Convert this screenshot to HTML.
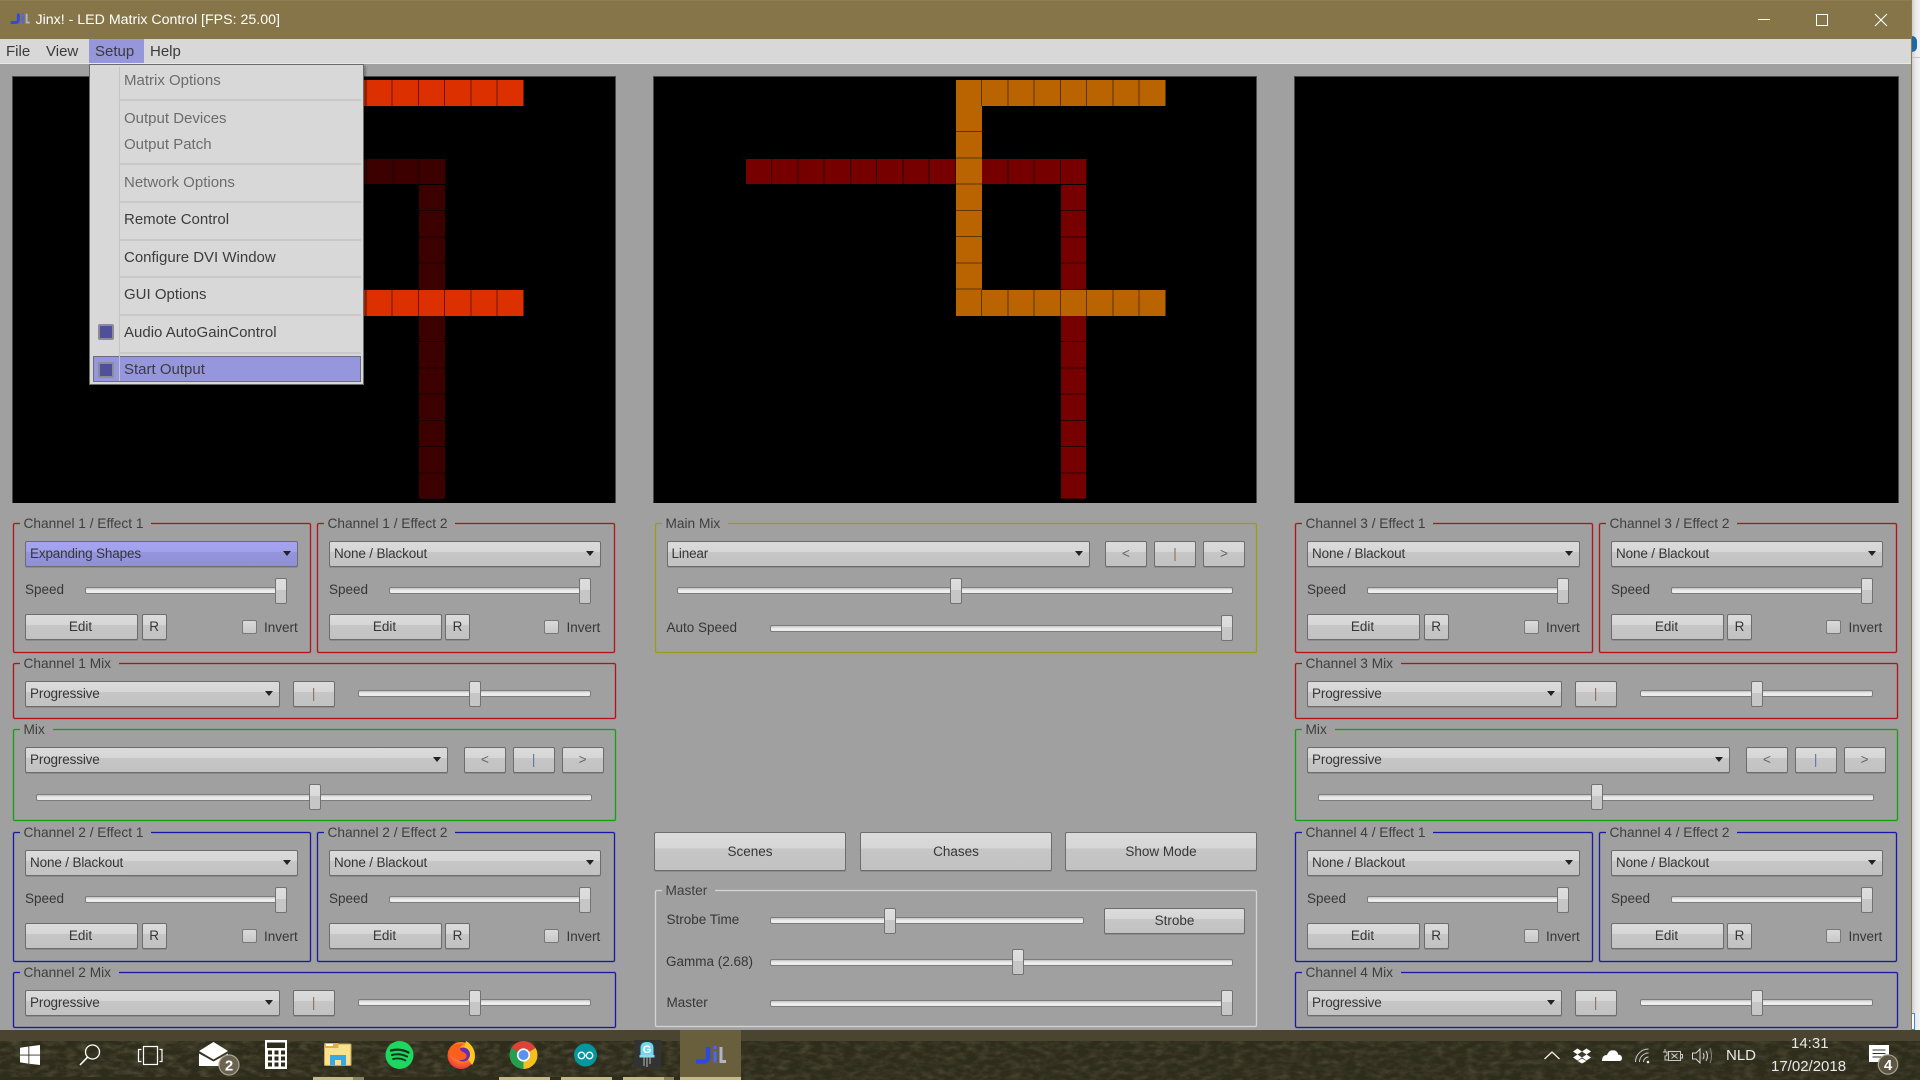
<!DOCTYPE html>
<html><head><meta charset="utf-8"><title>Jinx! - LED Matrix Control</title>
<style>
*{box-sizing:border-box}
html,body{margin:0;padding:0;width:1920px;height:1080px;overflow:hidden;background:#e8e8e8}
body{position:relative;font-family:"Liberation Sans",sans-serif}
.abs,.gb,.b,.t,.h,.x,.d,.s,.col,.lg,.cb,.orv,.drv,.mrv{position:absolute}
#side{left:1912px;top:0;width:8px;height:1030px;background:linear-gradient(90deg,#cfcfcf,#ececec 50%,#f2f2f2)}
#app{left:0;top:0;width:1912px;height:1030px;background:#a0a0a0;border-right:1px solid #8a7a50;overflow:hidden}
#title{left:0;top:0;width:1911px;height:39px;background:#857548;border-top:1px solid #8e7e52}
#mbar{left:0;top:39px;width:1911px;height:25px;background:#d8d8d8;border-bottom:1px solid #e8e8e8}
#ui{left:0;top:0;width:1911px;height:1030px;filter:blur(.35px)}
.d{background:#000;border:1px solid #4a4a4a;border-bottom:0;top:76px;width:604px;height:427px}
.s{height:25.6px}
.hz{width:209.9px}
.or{background:repeating-linear-gradient(90deg,#b96400 0 25.2px,#5a3600 25.2px 26.24px)}
.orv{background:repeating-linear-gradient(180deg,#b96400 0 25.2px,#5a3600 25.2px 26.24px);width:25.6px}
.dr{background:repeating-linear-gradient(90deg,#760000 0 25.2px,#2c0000 25.2px 26.24px)}
.drv{background:repeating-linear-gradient(180deg,#760000 0 25.2px,#2c0000 25.2px 26.24px);width:25.4px}
.rd{background:repeating-linear-gradient(90deg,#dc3000 0 25.2px,#6e1800 25.2px 26.24px)}
.mr{background:repeating-linear-gradient(90deg,#3c0000 0 25.2px,#1c0000 25.2px 26.24px)}
.mrv{background:repeating-linear-gradient(180deg,#3c0000 0 25.2px,#1c0000 25.2px 26.24px);width:25.4px}
.x,.b,.lg{font-size:13.5px;color:#363636;white-space:nowrap;line-height:16px}
.gb{border:1px solid;border-radius:2px}
.lg{top:-8px;left:6px;padding:0 8px 0 3.5px;background:#a0a0a0;color:#3e3e3e;font-size:13.7px}
.R{border-color:#b01418;box-shadow:0 0 1px #b01418,inset 0 0 1px #b01418}
.G{border-color:#14a014;box-shadow:0 0 1px #14a014,inset 0 0 1px #14a014}
.B{border-color:#1818a4;box-shadow:0 0 1px #1818a4,inset 0 0 1px #1818a4}
.O{border-color:#9c9c14;box-shadow:0 0 1px #9c9c14,inset 0 0 1px #9c9c14}
.W{border-color:#d4d4d4;box-shadow:0 0 1px #d4d4d4,inset 0 0 1px #d4d4d4}
.b{height:26px;border:1px solid #6c6c6c;border-radius:2px;background:linear-gradient(#dbdbdb 0,#d6d6d6 42%,#c6c6c6 42%,#c2c2c2 100%);text-align:center;line-height:24px;box-shadow:0 1px 0 #8c8c8c}
.c{text-align:left;padding-left:4px;letter-spacing:-.15px}
.c:after{content:"";position:absolute;right:6px;top:9px;border-left:4.5px solid transparent;border-right:4.5px solid transparent;border-top:5.5px solid #222}
.sel{background:linear-gradient(#a4a4f0 0,#a0a0ec 42%,#9494dc 42%,#9090d8 100%)}
.t{height:7px;border:1px solid #7c7c7c;border-radius:2px;background:linear-gradient(#cccccc 0,#cccccc 30%,#ececec 30%)}
.h{width:12px;height:26px;border:1px solid #727272;border-radius:2px;background:linear-gradient(#dedede 0,#dadada 45%,#c6c6c6 45%)}
.cb{width:15px;height:14px;border:1px solid #787878;border-radius:2px;background:linear-gradient(#dadada,#c8c8c8)}
.col{left:0;top:0;width:1911px;height:1030px}
.ef{left:13px;width:298px;height:130px}
.e2{left:317px}
.ef .c{left:11px;top:17px;width:273px}
.e2 .c{width:272px}
.ef .sp{left:11px;top:58px}
.ef .t{left:71px;top:63px;width:197px}
.ef .h{left:261px;top:54px}
.ef .ed{left:11px;top:90px;width:113px;padding-right:2px}
.ef .r{left:127.6px;top:90px;width:25px}
.ef .cb{left:228px;top:96px}
.ef .iv{left:250px;top:95.5px}
.e2 .cb{left:226px}.e2 .iv{left:248.5px}
.e2 .r{left:127px}
.mx{left:13px;width:603px;height:56px}
.mx .c{left:11px;top:17px;width:255px}
.mx .p{left:278.6px;top:17px;width:42px}
.mx .t{left:344px;top:25.5px;width:233px}
.mx .h{left:455px;top:17px}
.m2{left:13px;top:729px;width:603px;height:92px}
.m2 .c{left:11px;top:17px;width:423px}
.m2 .n1{left:450px;top:17px;width:42px}
.m2 .n2{left:498.6px;top:17px;width:42px}
.m2 .n3{left:547.6px;top:17px;width:42px}
.m2 .t{left:21.5px;top:63.5px;width:556.5px}
.m2 .h{left:295px;top:54px}
.o{color:#8a7058}.l{color:#5878a8}.g{color:#666}
#menu{left:89px;top:64px;width:275px;height:321px;background:#d8d8d8;border:1px solid #6a6a6a;box-shadow:2px 2px 2px rgba(0,0,0,.25)}
#menu .v{position:absolute;left:29px;top:2px;width:1px;height:314px;background:#c4c4c4}
#menu .sep{position:absolute;left:29px;right:2px;height:2px;background:#c8c8c8}
#menu .x{font-size:15px;left:34px;color:#3c3c3c}
#menu .dim{color:#6c6c6c}
#hl{left:3px;top:291px;width:268px;height:26px;background:#9696dc;border:1px solid #6c6c80}
.ck{position:absolute;width:16px;height:16px;background:#50509a;border:2px solid #8c8c94;border-radius:2px;left:8px}
#task{left:0;top:1030px;width:1920px;height:50px;background:#2e2c1b}
#band{left:0;top:1030px;width:1920px;height:11px;background:#4a4430}
#act{left:680px;top:1030px;width:61px;height:50px;background:#6a5f3c}
.u{position:absolute;top:1077px;height:3px;background:#c5b98a}
.u2{background:#8c8460}
.tb{position:absolute;color:#e8e8e8;font-size:15px;line-height:18px;white-space:nowrap;filter:blur(.25px)}
svg{position:absolute;left:0;top:0}
</style></head><body>
<div class="abs" id="side"></div>
<div class="abs" style="left:1912px;top:36px;width:5px;height:16px;background:#1a6aa8;border-radius:0 8px 8px 0"></div>
<div class="abs" style="left:1912px;top:57px;width:8px;height:1px;background:#c4c4c4"></div>
<div class="abs" style="left:1912px;top:1013px;width:3px;height:17px;border:1px solid #3090d0;border-left:0;background:#fff"></div>
<div class="abs" id="app"></div>

<!-- displays -->
<div class="d" style="left:12px"></div>
<div class="d" style="left:653px"></div>
<div class="d" style="left:1294px;width:605px"></div>

<!-- left LEDs -->
<div class="s rd hz" style="left:314.2px;top:80px"></div>
<div class="s mr" style="left:340.5px;top:158.5px;width:105px"></div>
<div class="mrv" style="left:419.2px;top:184.6px;height:105px"></div>
<div class="s rd hz" style="left:314.2px;top:290px"></div>
<div class="mrv" style="left:419.2px;top:315.8px;height:183.5px"></div>

<!-- middle LEDs -->
<div class="s dr" style="left:746.1px;top:158.5px;width:341px"></div>
<div class="drv" style="left:1061px;top:184.6px;height:105px"></div>
<div class="drv" style="left:1061px;top:315.8px;height:183.5px"></div>
<div class="s or hz" style="left:956px;top:80px"></div>
<div class="orv" style="left:956px;top:106.2px;height:183.7px"></div>
<div class="s or hz" style="left:956px;top:290px"></div>

<div class="abs" id="title"></div>
<div class="abs" id="mbar"></div>
<div class="abs" style="left:89px;top:39px;width:55px;height:24px;background:#9696dc"></div>

<div class="abs" id="ui">
<div class="x" style="left:35.5px;top:11px;font-size:14.2px;color:#fff;line-height:18px">Jinx! - LED Matrix Control [FPS: 25.00]</div>
<div class="x" style="left:6px;top:44px;font-size:15px;color:#3a3a3a">File</div>
<div class="x" style="left:46px;top:44px;font-size:15px;color:#3a3a3a">View</div>
<div class="x" style="left:95px;top:44px;font-size:15px;color:#3a3a3a">Setup</div>
<div class="x" style="left:150px;top:44px;font-size:15px;color:#3a3a3a">Help</div>

<!-- LEFT COLUMN -->
<div class="col">
<div class="gb ef R" style="top:523px"><span class="lg">Channel 1 / Effect 1</span><div class="b c sel">Expanding Shapes</div><div class="x sp">Speed</div><div class="t"></div><div class="h"></div><div class="b ed">Edit</div><div class="b r">R</div><div class="cb"></div><div class="x iv">Invert</div></div>
<div class="gb ef e2 R" style="top:523px"><span class="lg">Channel 1 / Effect 2</span><div class="b c">None / Blackout</div><div class="x sp">Speed</div><div class="t"></div><div class="h"></div><div class="b ed">Edit</div><div class="b r">R</div><div class="cb"></div><div class="x iv">Invert</div></div>
<div class="gb mx R" style="top:663px"><span class="lg">Channel 1 Mix</span><div class="b c">Progressive</div><div class="b p o">|</div><div class="t"></div><div class="h"></div></div>
<div class="gb m2 G"><span class="lg">Mix</span><div class="b c">Progressive</div><div class="b n1 g">&lt;</div><div class="b n2 l">|</div><div class="b n3 g">&gt;</div><div class="t"></div><div class="h"></div></div>
<div class="gb ef B" style="top:832px"><span class="lg">Channel 2 / Effect 1</span><div class="b c">None / Blackout</div><div class="x sp">Speed</div><div class="t"></div><div class="h"></div><div class="b ed">Edit</div><div class="b r">R</div><div class="cb"></div><div class="x iv">Invert</div></div>
<div class="gb ef e2 B" style="top:832px"><span class="lg">Channel 2 / Effect 2</span><div class="b c">None / Blackout</div><div class="x sp">Speed</div><div class="t"></div><div class="h"></div><div class="b ed">Edit</div><div class="b r">R</div><div class="cb"></div><div class="x iv">Invert</div></div>
<div class="gb mx B" style="top:972px"><span class="lg">Channel 2 Mix</span><div class="b c">Progressive</div><div class="b p o">|</div><div class="t"></div><div class="h"></div></div>
</div>

<!-- RIGHT COLUMN -->
<div class="col" style="left:1282px">
<div class="gb ef R" style="top:523px"><span class="lg">Channel 3 / Effect 1</span><div class="b c">None / Blackout</div><div class="x sp">Speed</div><div class="t"></div><div class="h"></div><div class="b ed">Edit</div><div class="b r">R</div><div class="cb"></div><div class="x iv">Invert</div></div>
<div class="gb ef e2 R" style="top:523px"><span class="lg">Channel 3 / Effect 2</span><div class="b c">None / Blackout</div><div class="x sp">Speed</div><div class="t"></div><div class="h"></div><div class="b ed">Edit</div><div class="b r">R</div><div class="cb"></div><div class="x iv">Invert</div></div>
<div class="gb mx R" style="top:663px"><span class="lg">Channel 3 Mix</span><div class="b c">Progressive</div><div class="b p o">|</div><div class="t"></div><div class="h"></div></div>
<div class="gb m2 G"><span class="lg">Mix</span><div class="b c">Progressive</div><div class="b n1 g">&lt;</div><div class="b n2 l">|</div><div class="b n3 g">&gt;</div><div class="t"></div><div class="h"></div></div>
<div class="gb ef B" style="top:832px"><span class="lg">Channel 4 / Effect 1</span><div class="b c">None / Blackout</div><div class="x sp">Speed</div><div class="t"></div><div class="h"></div><div class="b ed">Edit</div><div class="b r">R</div><div class="cb"></div><div class="x iv">Invert</div></div>
<div class="gb ef e2 B" style="top:832px"><span class="lg">Channel 4 / Effect 2</span><div class="b c">None / Blackout</div><div class="x sp">Speed</div><div class="t"></div><div class="h"></div><div class="b ed">Edit</div><div class="b r">R</div><div class="cb"></div><div class="x iv">Invert</div></div>
<div class="gb mx B" style="top:972px"><span class="lg">Channel 4 Mix</span><div class="b c">Progressive</div><div class="b p o">|</div><div class="t"></div><div class="h"></div></div>
</div>

<!-- MIDDLE -->
<div class="gb O" style="left:655px;top:523px;width:602px;height:130px"><span class="lg">Main Mix</span></div>
<div class="b c" style="left:666.5px;top:541px;width:423px">Linear</div>
<div class="b g" style="left:1105px;top:541px;width:42px">&lt;</div>
<div class="b o" style="left:1154px;top:541px;width:42px">|</div>
<div class="b g" style="left:1203px;top:541px;width:42px">&gt;</div>
<div class="t" style="left:677px;top:587px;width:556px"></div>
<div class="h" style="left:950px;top:578px"></div>
<div class="x" style="left:666.5px;top:619.5px">Auto Speed</div>
<div class="t" style="left:770px;top:624.5px;width:463px"></div>
<div class="h" style="left:1221px;top:615px"></div>

<div class="b" style="left:654px;top:832px;width:192px;height:39px;line-height:37px">Scenes</div>
<div class="b" style="left:860px;top:832px;width:192px;height:39px;line-height:37px">Chases</div>
<div class="b" style="left:1065px;top:832px;width:192px;height:39px;line-height:37px">Show Mode</div>

<div class="gb W" style="left:655px;top:890px;width:602px;height:137px"><span class="lg">Master</span></div>
<div class="x" style="left:666.5px;top:912px">Strobe Time</div>
<div class="t" style="left:770px;top:917px;width:314px"></div>
<div class="h" style="left:884px;top:908px"></div>
<div class="b" style="left:1104px;top:908px;width:141px">Strobe</div>
<div class="x" style="left:666px;top:953.5px">Gamma (2.68)</div>
<div class="t" style="left:770px;top:958.5px;width:463px"></div>
<div class="h" style="left:1012px;top:949px"></div>
<div class="x" style="left:666.5px;top:995px">Master</div>
<div class="t" style="left:770px;top:1000px;width:463px"></div>
<div class="h" style="left:1221px;top:990px"></div>

<!-- Setup menu -->
<div class="abs" id="menu">
<div class="abs" id="hl"></div>
<div class="v"></div>
<div class="x dim" style="top:8px">Matrix Options</div>
<div class="sep" style="top:34px"></div>
<div class="x dim" style="top:46px">Output Devices</div>
<div class="x dim" style="top:72px">Output Patch</div>
<div class="sep" style="top:98px"></div>
<div class="x dim" style="top:110px">Network Options</div>
<div class="sep" style="top:136px"></div>
<div class="x" style="top:147px">Remote Control</div>
<div class="sep" style="top:174px"></div>
<div class="x" style="top:185px">Configure DVI Window</div>
<div class="sep" style="top:211px"></div>
<div class="x" style="top:222px">GUI Options</div>
<div class="sep" style="top:249px"></div>
<div class="ck" style="top:259px"></div>
<div class="x" style="top:260px">Audio AutoGainControl</div>
<div class="sep" style="top:287px"></div>
<div class="ck" style="top:297px"></div>
<div class="x" style="top:297px">Start Output</div>
</div>
</div>

<!-- taskbar -->
<div class="abs" id="task"></div>
<div class="abs" id="band"></div>
<div class="abs" id="act"></div>
<div class="u" style="left:313px;width:40px"></div><div class="u u2" style="left:353px;width:11px"></div>
<div class="u" style="left:499px;width:51px"></div>
<div class="u" style="left:561px;width:51px"></div>
<div class="u" style="left:623px;width:41px"></div><div class="u u2" style="left:664px;width:10px"></div>
<div class="u" style="left:680px;width:61px"></div>

<svg width="1920" height="1080" viewBox="0 0 1920 1080" xmlns="http://www.w3.org/2000/svg">
<defs>
<radialGradient id="ff" cx=".55" cy=".35" r=".75"><stop offset="0" stop-color="#ffd030"/><stop offset=".5" stop-color="#ff7a20"/><stop offset="1" stop-color="#e0204a"/></radialGradient>
<filter id="gr" x="0" y="0" width="1" height="1"><feTurbulence type="fractalNoise" baseFrequency=".09 .2" numOctaves="3" seed="4"/><feColorMatrix values="0 0 0 0 .36  0 0 0 0 .36  0 0 0 0 .2  0 0 0 1.1 -.42"/></filter>
</defs>
<rect x="0" y="1041" width="680" height="36" filter="url(#gr)" opacity=".5"/>
<rect x="741" y="1041" width="1179" height="39" filter="url(#gr)" opacity=".4"/>
<!-- title buttons -->
<path d="M1758 19.5H1770" stroke="#fff" stroke-width="1"/>
<rect x="1816.5" y="14.5" width="11" height="11" fill="none" stroke="#fff"/>
<path d="M1875 14L1887 26M1887 14L1875 26" stroke="#fff" stroke-width="1.1"/>
<!-- title jinx icon -->
<g transform="translate(10 13) scale(.64)"><path d="M13 1V11Q13 15 8 15H1" fill="none" stroke="#3048e0" stroke-width="4.5"/><path d="M20 5V16M20 0V3" stroke="#4a66f0" stroke-width="3.2"/><path d="M26 1V15H31" fill="none" stroke="#b0b4c4" stroke-width="3"/></g>
<!-- windows -->
<g fill="#fff"><polygon points="20,1047.7 28.4,1046.5 28.4,1054.6 20,1054.6"/><polygon points="29.3,1046.4 40,1045 40,1054.6 29.3,1054.6"/><polygon points="20,1055.5 28.4,1055.5 28.4,1063.6 20,1062.4"/><polygon points="29.3,1055.5 40,1055.5 40,1065 29.3,1063.7"/></g>
<!-- search -->
<circle cx="92.5" cy="1052" r="7" fill="none" stroke="#fff" stroke-width="1.3"/><path d="M87.5 1057.2L80 1065" stroke="#fff" stroke-width="1.6"/>
<!-- task view -->
<rect x="143.5" y="1046.5" width="14" height="18" fill="none" stroke="#fff" stroke-width="1.2"/><path d="M141.5 1049.5H138.5V1061.5H141.5M159.5 1049.5H162V1061.5H159.5" fill="none" stroke="#fff" stroke-width="1.2"/>
<!-- mail -->
<path d="M199 1051L213.5 1042L228 1051L213.5 1059.5Z" fill="#fff"/><path d="M199 1053.5L213.5 1061.5L228 1053.5V1066H199Z" fill="#fff"/>
<circle cx="229" cy="1065" r="10" fill="#6a6350" stroke="#a8a290" stroke-width="1.2"/><text x="229" y="1070.5" text-anchor="middle" font-family="Liberation Sans" font-weight="bold" font-size="15" fill="#fff">2</text>
<!-- calculator -->
<rect x="265" y="1040" width="22" height="29" fill="#fff"/><rect x="267" y="1042.5" width="18" height="5.5" fill="#2e2c1b"/>
<g fill="#2e2c1b"><rect x="268" y="1050.5" width="4" height="4"/><rect x="274.5" y="1050.5" width="4" height="4"/><rect x="281" y="1050.5" width="4" height="4"/><rect x="268" y="1056.5" width="4" height="4"/><rect x="274.5" y="1056.5" width="4" height="4"/><rect x="281" y="1056.5" width="4" height="4"/><rect x="268" y="1062.5" width="4" height="4"/><rect x="274.5" y="1062.5" width="4" height="4"/><rect x="281" y="1062.5" width="4" height="4"/></g>
<!-- folder -->
<rect x="324.5" y="1044" width="26.5" height="21.5" rx="1" fill="#fbe08e" stroke="#c4a45c"/><rect x="324.5" y="1043" width="14" height="5" fill="#d8b050"/><rect x="326" y="1044" width="7" height="2" fill="#fff"/>
<path d="M330 1065.5V1055H346V1065.5H341V1060H335V1065.5Z" fill="#35a9e8"/>
<!-- spotify -->
<circle cx="399.5" cy="1055" r="14" fill="#1ed760"/><g fill="none" stroke="#12301c" stroke-linecap="round"><path d="M391 1050.5Q400 1048 408.5 1052.5" stroke-width="2.3"/><path d="M392 1055Q400 1053 407 1056.5" stroke-width="2"/><path d="M393 1059Q400 1057.5 405.5 1060.5" stroke-width="1.7"/></g>
<!-- firefox -->
<circle cx="461" cy="1055.5" r="13.5" fill="url(#ff)"/><path d="M466 1041C476 1047 477 1058 472 1065L463 1052Z" fill="#ffc820"/><circle cx="463" cy="1054.5" r="7" fill="#6a2ab8"/><path d="M448 1052C452 1044 458 1043 464 1044C459 1047 459 1050 463 1052C468 1054 468 1059 462 1060C456 1061 452 1057 448 1052Z" fill="#f8601c"/>
<!-- chrome -->
<path d="M523.5 1055L511.4 1048A14 14 0 0 1 535.6 1048Z" fill="#db4437"/><path d="M523.5 1055L511.4 1048A14 14 0 0 0 523.5 1069Z" fill="#279d50"/><path d="M523.5 1055L535.6 1048A14 14 0 0 1 523.5 1069Z" fill="#f4c020"/><circle cx="523.5" cy="1055" r="6.6" fill="#fff"/><circle cx="523.5" cy="1055" r="5" fill="#5a90ee"/>
<!-- arduino -->
<circle cx="585.5" cy="1055" r="11.5" fill="#00979d"/><g fill="none" stroke="#e8f8f8" stroke-width="1.5"><circle cx="581.5" cy="1055.5" r="3.2"/><circle cx="589.5" cy="1055.5" r="3.2"/></g>
<!-- led -->
<rect x="634" y="1040" width="27" height="28" fill="#333"/><path d="M640.5 1056V1048Q640.5 1042 647 1042Q653.5 1042 653.5 1048V1056Z" fill="#72d8f0"/><rect x="639.5" y="1055" width="15" height="2.5" fill="#8adcf0"/><path d="M644 1057V1066M647 1057V1067M650 1057V1064" stroke="#b8b8b8" stroke-width="1"/>
<text x="647" y="1053" text-anchor="middle" font-family="Liberation Sans" font-weight="bold" font-size="11" fill="#fff">G</text>
<!-- jinx -->
<g transform="translate(695 1046)"><path d="M13 1V11Q13 15.5 8 15.5H1" fill="none" stroke="#3048e0" stroke-width="4.5"/><path d="M20 5V16.5M20 0V3" stroke="#4a66f0" stroke-width="3.2"/><path d="M26 1V15.5H31" fill="none" stroke="#b0b4c4" stroke-width="3"/></g>
<!-- tray -->
<path d="M1544.5 1059L1552 1052L1559.5 1059" fill="none" stroke="#eee" stroke-width="1.3"/>
<g fill="#fff"><path d="M1573 1051.5L1577.5 1048.5L1582 1051.5L1577.5 1054.5Z"/><path d="M1582 1051.5L1586.5 1048.5L1591 1051.5L1586.5 1054.5Z"/><path d="M1573 1057.5L1577.5 1054.5L1582 1057.5L1577.5 1060.5Z"/><path d="M1582 1057.5L1586.5 1054.5L1591 1057.5L1586.5 1060.5Z"/><path d="M1577.5 1061L1582 1058.5L1586.5 1061L1582 1063.5Z"/></g>
<path d="M1602 1061Q1602 1055 1607 1055Q1609 1049 1615 1050.5Q1618 1052 1618 1054.5Q1622 1055 1622 1058Q1622 1061 1619 1061Z" fill="#fff"/>
<g fill="none" stroke="#c8c8c8" stroke-width="1"><path d="M1635.5 1062A13 13 0 0 1 1648.5 1049"/><path d="M1639.5 1062A9 9 0 0 1 1648.5 1053"/><path d="M1643.5 1062A5 5 0 0 1 1648.5 1057"/></g><circle cx="1648" cy="1062" r="1.3" fill="#eee"/>
<g fill="none" stroke="#c8c8c8" stroke-width="1"><rect x="1668.5" y="1051.5" width="12" height="9"/><path d="M1681 1054.5H1682.5V1058H1681M1665 1049V1052M1663 1052H1667V1055Q1667 1056 1665 1056V1060H1668M1671.5 1053.5L1677.5 1058.5M1677.5 1053.5L1671.5 1058.5"/></g>
<g fill="none" stroke="#d8d8d8" stroke-width="1"><path d="M1692.5 1053H1696L1700 1049V1063L1696 1059H1692.5Z"/><path d="M1703 1053Q1705 1056 1703 1059M1706 1051Q1709 1056 1706 1061"/><path d="M1710 1048Q1713 1056 1710 1063" stroke="#888"/></g>
<path d="M1869 1045H1889V1062H1869Z" fill="#fff"/><path d="M1872.5 1050H1885.5M1872.5 1053.5H1885.5M1872.5 1057H1885.5" stroke="#333" stroke-width="1.1"/>
<circle cx="1888" cy="1064.5" r="9.7" fill="#5c5642" stroke="#a8a290" stroke-width="1.2"/><text x="1888" y="1070" text-anchor="middle" font-family="Liberation Sans" font-weight="bold" font-size="15" fill="#fff">4</text>
</svg>
<div class="tb" style="left:1726px;top:1047px">NLD</div>
<div class="tb" style="left:1791px;top:1035px">14:31</div>
<div class="tb" style="left:1771px;top:1058px">17/02/2018</div>
</body></html>
